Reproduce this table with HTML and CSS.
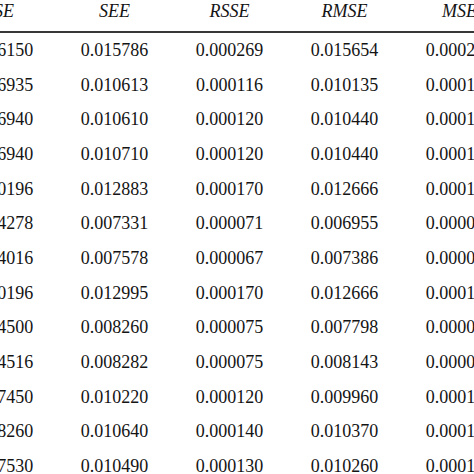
FILE: index.html
```html
<!DOCTYPE html>
<html>
<head>
<meta charset="utf-8">
<link rel="stylesheet" href="styles.css">
</head>
<body>
<div class="frame">
  <div class="grid">
    <div class="h">SSE</div><div class="h">SEE</div><div class="h">RSSE</div><div class="h">RMSE</div><div class="h">MSE</div>
    <div>0.016150</div><div>0.015786</div><div>0.000269</div><div>0.015654</div><div>0.000245</div>
    <div>0.006935</div><div>0.010613</div><div>0.000116</div><div>0.010135</div><div>0.000103</div>
    <div>0.006940</div><div>0.010610</div><div>0.000120</div><div>0.010440</div><div>0.000109</div>
    <div>0.006940</div><div>0.010710</div><div>0.000120</div><div>0.010440</div><div>0.000109</div>
    <div>0.010196</div><div>0.012883</div><div>0.000170</div><div>0.012666</div><div>0.000160</div>
    <div>0.004278</div><div>0.007331</div><div>0.000071</div><div>0.006955</div><div>0.000048</div>
    <div>0.004016</div><div>0.007578</div><div>0.000067</div><div>0.007386</div><div>0.000055</div>
    <div>0.010196</div><div>0.012995</div><div>0.000170</div><div>0.012666</div><div>0.000160</div>
    <div>0.004500</div><div>0.008260</div><div>0.000075</div><div>0.007798</div><div>0.000061</div>
    <div>0.004516</div><div>0.008282</div><div>0.000075</div><div>0.008143</div><div>0.000066</div>
    <div>0.007450</div><div>0.010220</div><div>0.000120</div><div>0.009960</div><div>0.000100</div>
    <div>0.008260</div><div>0.010640</div><div>0.000140</div><div>0.010370</div><div>0.000108</div>
    <div>0.007530</div><div>0.010490</div><div>0.000130</div><div>0.010260</div><div>0.000105</div>
  </div>
</div>
</body>
</html>
```
FILE: styles.css
```css
html, body {
  margin: 0;
  padding: 0;
  background: #ffffff;
  overflow: hidden;
}
.frame {
  width: 474px;
  height: 474px;
  overflow: hidden;
}
.grid {
  display: grid;
  grid-template-columns: repeat(5, 115px);
  margin-left: -58px;
  font-family: "Liberation Serif", "Times New Roman", serif;
  font-size: 18px;
  color: #141414;
  text-align: center;
  line-height: 34.67px;
}
.h {
  font-style: italic;
  line-height: 20px;
  padding-top: 1px;
  padding-bottom: 10px;
  border-bottom: 2px solid #383838;
}
```
